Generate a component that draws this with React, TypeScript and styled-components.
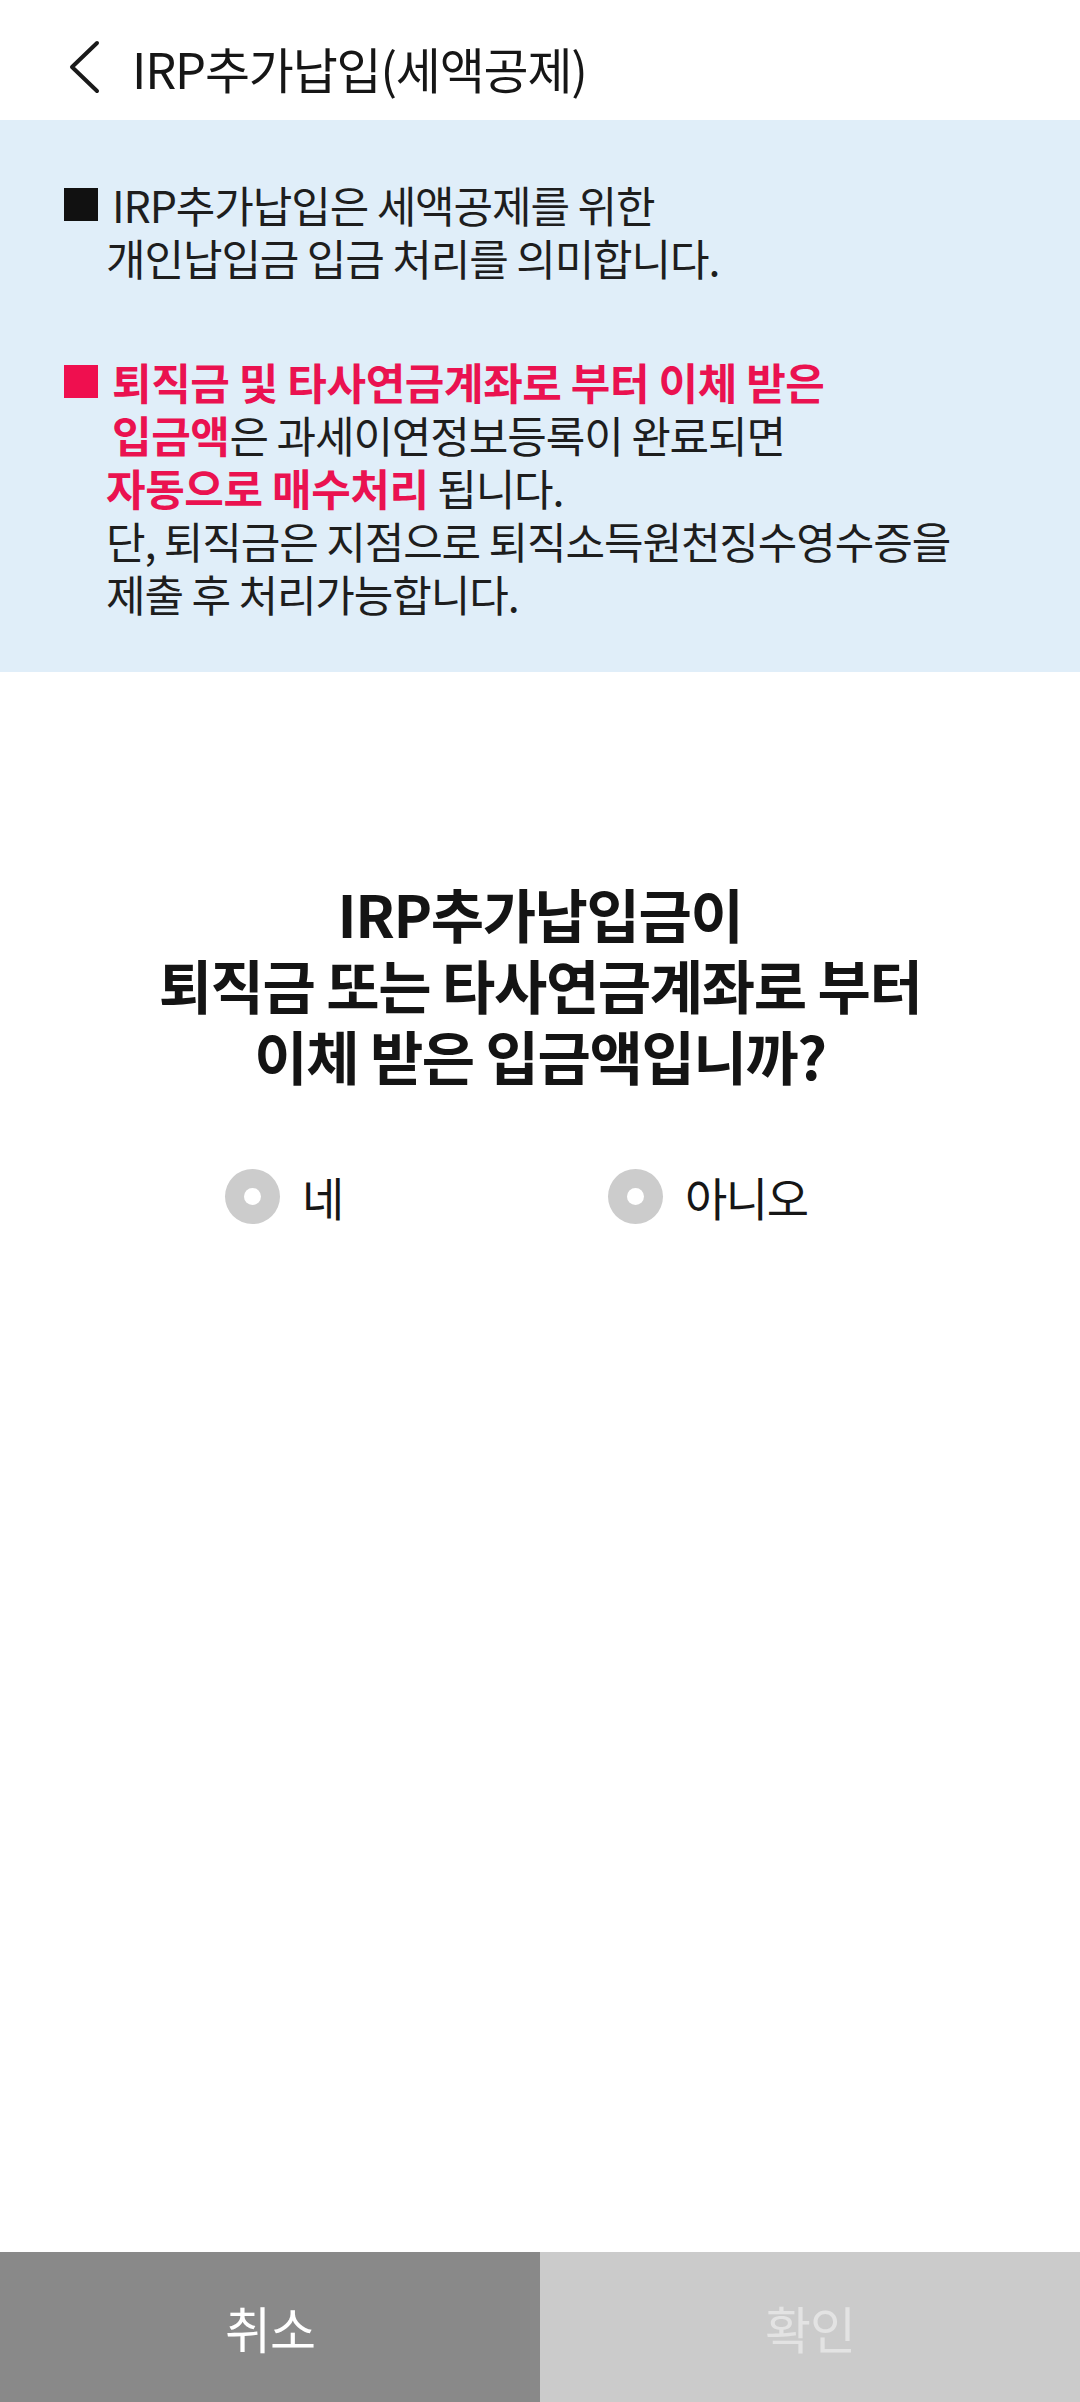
import styled, { createGlobalStyle } from "styled-components";

const GlobalStyle = createGlobalStyle`
  html, body {
    margin: 0;
    padding: 0;
    background: #ffffff;
  }
  body {
    font-family: "Noto Sans CJK KR", "Noto Sans", sans-serif;
    color: #1a1a1a;
  }
`;

const Page = styled.div`
  display: flex;
  flex-direction: column;
  min-height: 100vh;
`;

const Header = styled.header`
  display: flex;
  align-items: center;
  gap: 30px;
  height: 120px;
  padding: 14px 0 0 66px;
  box-sizing: border-box;
`;

const BackButton = styled.button`
  display: flex;
  align-items: center;
  justify-content: center;
  width: 36px;
  height: 56px;
  padding: 0;
  border: 0;
  background: none;
`;

const Title = styled.h1`
  margin: 0;
  font-size: 49px;
  font-weight: 400;
  letter-spacing: -1.2px;
  color: #161616;
`;

const Notice = styled.section`
  display: flex;
  flex-direction: column;
  gap: 71px;
  padding: 58px 30px 52px 64px;
  background: #e0eef9;
`;

const Para = styled.p`
  position: relative;
  margin: 0;
  padding-left: 42px;
  font-size: 43px;
  line-height: 53px;
  letter-spacing: -1.1px;
  color: #1e1e1e;
`;

const Line = styled.span<{ $indent?: number }>`
  display: block;
  text-indent: ${(p) => p.$indent ?? 0}px;
`;

const Bullet = styled.span<{ $tone: "dark" | "red" }>`
  position: absolute;
  left: 0;
  top: 10px;
  width: 34px;
  height: 33px;
  background: ${(p) => (p.$tone === "red" ? "#ef0f4f" : "#111111")};
`;

const Strong = styled.b`
  font-weight: 700;
  letter-spacing: -0.4px;
  color: #ea1250;
`;

const Question = styled.h2`
  margin: 206px 0 0;
  text-align: center;
  font-size: 58px;
  line-height: 71px;
  font-weight: 700;
  letter-spacing: -1.4px;
  color: #141414;
`;

const RadioRow = styled.div`
  display: grid;
  grid-template-columns: 383px auto;
  margin-top: 77px;
  padding-left: 225px;
`;

const RadioOption = styled.label`
  display: flex;
  align-items: center;
  gap: 22px;
  height: 56px;
  font-size: 46px;
  letter-spacing: -1.5px;
  color: #161616;
`;

const RadioDot = styled.span`
  display: flex;
  align-items: center;
  justify-content: center;
  width: 55px;
  height: 55px;
  border-radius: 50%;
  background: #cccccc;

  &::after {
    content: "";
    width: 17px;
    height: 17px;
    border-radius: 50%;
    background: #ffffff;
  }
`;

const Spacer = styled.div`
  flex: 1;
`;

const Footer = styled.footer`
  display: grid;
  grid-template-columns: 1fr 1fr;
  height: 150px;
`;

const FooterButton = styled.button<{ $variant: "cancel" | "confirm" }>`
  border: 0;
  margin: 0;
  font-family: inherit;
  font-size: 50px;
  letter-spacing: -1px;
  background: ${(p) => (p.$variant === "cancel" ? "#898989" : "#cbcbcb")};
  color: ${(p) => (p.$variant === "cancel" ? "#ffffff" : "#e3e3e3")};
`;

const ChevronLeft = () => (
  <svg width="34" height="54" viewBox="0 0 34 54" fill="none">
    <path
      d="M30 3 L5 27 L30 51"
      stroke="#1a1a1a"
      strokeWidth="4"
      strokeLinecap="round"
      strokeLinejoin="round"
    />
  </svg>
);

export default function App() {
  return (
    <>
      <GlobalStyle />
      <Page>
        <Header>
          <BackButton aria-label="뒤로">
            <ChevronLeft />
          </BackButton>
          <Title>IRP추가납입(세액공제)</Title>
        </Header>

        <Notice>
          <Para>
            <Bullet $tone="dark" />
            <Line $indent={6}>IRP추가납입은 세액공제를 위한</Line>
            <Line>개인납입금 입금 처리를 의미합니다.</Line>
          </Para>
          <Para>
            <Bullet $tone="red" />
            <Line $indent={6}>
              <Strong>퇴직금 및 타사연금계좌로 부터 이체 받은</Strong>
            </Line>
            <Line $indent={6}>
              <Strong>입금액</Strong>은 과세이연정보등록이 완료되면
            </Line>
            <Line>
              <Strong>자동으로 매수처리</Strong> 됩니다.
            </Line>
            <Line>단, 퇴직금은 지점으로 퇴직소득원천징수영수증을</Line>
            <Line>제출 후 처리가능합니다.</Line>
          </Para>
        </Notice>

        <Question>
          IRP추가납입금이
          <br />
          퇴직금 또는 타사연금계좌로 부터
          <br />
          이체 받은 입금액입니까?
        </Question>

        <RadioRow>
          <RadioOption>
            <RadioDot />네
          </RadioOption>
          <RadioOption>
            <RadioDot />아니오
          </RadioOption>
        </RadioRow>

        <Spacer />

        <Footer>
          <FooterButton $variant="cancel">취소</FooterButton>
          <FooterButton $variant="confirm">확인</FooterButton>
        </Footer>
      </Page>
    </>
  );
}
